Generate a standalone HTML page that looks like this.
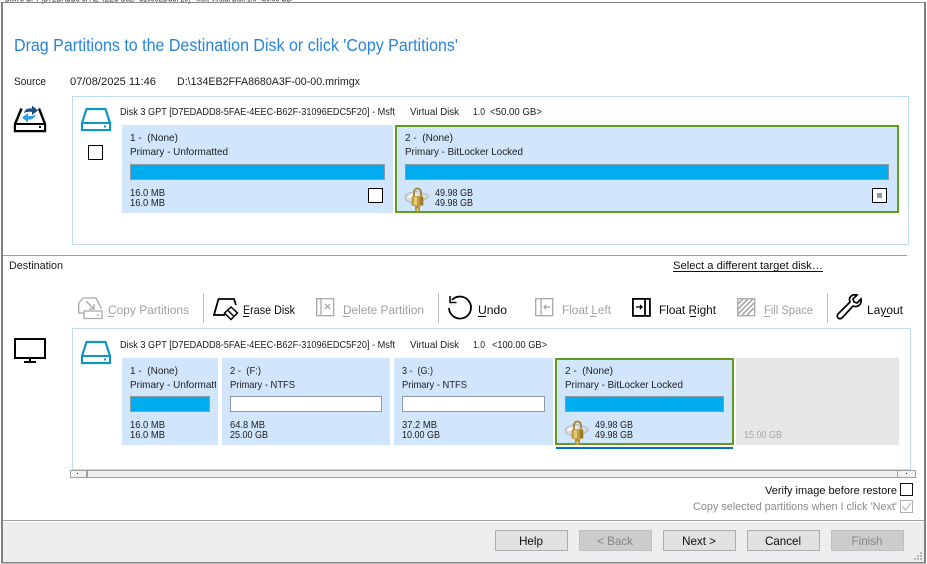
<!DOCTYPE html>
<html><head><meta charset="utf-8"><style>
html,body{margin:0;padding:0;background:#fff;overflow:hidden}
svg{display:block}
text{font-family:"Liberation Sans",sans-serif;font-size:10.2px;fill:#1c1c1c}
.s{font-size:10.2px}
.m{font-size:11px}
.t{font-size:12.4px;fill:#0c0c0c}
.d{font-size:12.4px;fill:#a0a0a0}
.b{font-size:11.6px;fill:#0c0c0c;text-anchor:middle}
.x{font-size:11.6px;fill:#858585;text-anchor:middle}
</style></head><body>
<svg width="927" height="564" viewBox="0 0 927 564" xmlns="http://www.w3.org/2000/svg" shape-rendering="crispEdges">
<defs>
<g id="disk"><path d="M86.500 109H105.500L110 123V130H82V123Z" fill="none" stroke="#0e96c4" stroke-width="2.200" shape-rendering="auto"/><rect x="81" y="122" width="30" height="9" fill="#0e96c4"/><rect x="83" y="124" width="26" height="5" fill="#fff"/><rect x="104" y="125.500" width="2" height="2" fill="#0e96c4"/></g>
<g id="lock" shape-rendering="auto">
<path d="M1 10C3 5 12 4 16 5L24 8C25 11 20 14 14 15 7 16 1 15 1 10Z" fill="#d9dde0" stroke="#a4a9ad" stroke-width=".8"/>
<path d="M3 10C6 7 11 7 14 8 11 11 6 12 3 10Z" fill="#fff"/>
<path d="M10 9V5a3.500 3.500 0 0 1 7 0V9" fill="none" stroke="#a98a3a" stroke-width="2"/>
<rect x="7.500" y="9" width="12" height="10" rx="2" fill="#c39c3c"/>
<rect x="10" y="10" width="3" height="8" fill="#e2cb7a"/>
<rect x="16" y="10" width="3" height="8" fill="#9c7a28"/>
<path d="M11 19h5v4l-1 2h-3l-1-2z" fill="#b8922f"/><circle cx="13.500" cy="22.500" r="1" fill="#f0dfa0"/>
</g>
</defs>

<!-- backdrop remnant & window frame -->
<text x="5" y="1.500" textLength="290" lengthAdjust="spacingAndGlyphs" style="fill:#333">Disk 3 GPT [D7EDADD8-5FAE-4EEC-B62F-31096EDC5F20] - Msft    Virtual Disk   1.0 &lt;50.00 GB&gt;</text>
<rect x="1" y="2" width="925" height="1" fill="#8a8a8a"/>
<rect x="1" y="2" width="2" height="561" fill="#808080"/>
<rect x="924" y="2" width="2" height="561" fill="#808080"/>
<rect x="1" y="562" width="925" height="1.500" fill="#808080"/>

<text x="14" y="51" textLength="444" lengthAdjust="spacingAndGlyphs" style="font-size:17.500px;fill:#2784dc">Drag Partitions to the Destination Disk or click 'Copy Partitions'</text>

<text class="m" x="14" y="85" textLength="32" lengthAdjust="spacingAndGlyphs">Source</text>
<text class="m" x="70" y="85" textLength="86" lengthAdjust="spacingAndGlyphs">07/08/2025 11:46</text>
<text class="m" x="177" y="85" textLength="183" lengthAdjust="spacingAndGlyphs">D:\134EB2FFA8680A3F-00-00.mrimgx</text>

<!-- source icon -->
<path d="M21.500 108.500L15 124V131H45V124L39 108.500" fill="none" stroke="#000" stroke-width="2.400" shape-rendering="auto"/>
<rect x="14" y="123" width="32" height="9" fill="#000"/><rect x="16" y="125" width="28" height="5" fill="#fff"/><rect x="39" y="126" width="2" height="2" fill="#000"/>
<path d="M24 113c1-4 4-5 8-4.500V105.500l6 5-6 4.500v-3c-3-.5-6 0-8 1z" fill="#1d4f86" shape-rendering="auto"/>
<path d="M36 114c-1 4-4 6-8 5.500v3l-6-5 6-4.500v3c3 .5 6-.5 8-1.500z" fill="#29a0e6" shape-rendering="auto"/>

<!-- source panel -->
<rect x="72.500" y="96.500" width="836" height="148" fill="#fff" stroke="#bddcf2"/>
<use href="#disk"/>
<text x="120" y="115" textLength="275" lengthAdjust="spacingAndGlyphs" class="s">Disk 3 GPT [D7EDADD8-5FAE-4EEC-B62F-31096EDC5F20] - Msft</text>
<text x="410" y="115" textLength="49" lengthAdjust="spacingAndGlyphs" class="s">Virtual Disk</text>
<text x="473" y="115" textLength="12" lengthAdjust="spacingAndGlyphs" class="s">1.0</text>
<text x="490" y="115" textLength="52" lengthAdjust="spacingAndGlyphs" class="s">&lt;50.00 GB&gt;</text>
<rect x="88.500" y="145.500" width="14" height="14" fill="#fff" stroke="#000"/>

<rect x="122" y="125" width="271" height="88" fill="#d1e6fc"/>
<text x="130" y="141" textLength="48" lengthAdjust="spacingAndGlyphs" class="s">1 -&#160;&#160;(None)</text>
<text x="130" y="155" textLength="98" lengthAdjust="spacingAndGlyphs" class="s">Primary - Unformatted</text>
<rect x="130.500" y="164.500" width="254" height="15" fill="#00adef" stroke="#8b9aa6"/>
<text x="130" y="196" textLength="35" lengthAdjust="spacingAndGlyphs" class="s">16.0 MB</text>
<text x="130" y="206" textLength="35" lengthAdjust="spacingAndGlyphs" class="s">16.0 MB</text>
<rect x="368.500" y="188.500" width="14" height="14" fill="#fff" stroke="#000"/>

<rect x="396" y="126" width="502" height="86" fill="#d1e6fc" stroke="#5f9e1a" stroke-width="2"/>
<text x="405" y="141" textLength="48" lengthAdjust="spacingAndGlyphs" class="s">2 -&#160;&#160;(None)</text>
<text x="405" y="155" textLength="118" lengthAdjust="spacingAndGlyphs" class="s">Primary - BitLocker Locked</text>
<rect x="405.500" y="164.500" width="483" height="15" fill="#00adef" stroke="#8b9aa6"/>
<use href="#lock" x="404" y="187"/>
<text x="435" y="196" textLength="38" lengthAdjust="spacingAndGlyphs" class="s">49.98 GB</text>
<text x="435" y="206" textLength="38" lengthAdjust="spacingAndGlyphs" class="s">49.98 GB</text>
<rect x="872.500" y="188.500" width="14" height="14" fill="#fff" stroke="#000"/>
<rect x="877" y="193" width="5" height="5" fill="#929ea0"/>

<!-- destination header -->
<rect x="3" y="255" width="904" height="1" fill="#a0a0a0"/>
<text x="9" y="269" textLength="54" lengthAdjust="spacingAndGlyphs" class="m">Destination</text>
<text x="673" y="269" textLength="150" lengthAdjust="spacingAndGlyphs" class="m" style="fill:#111">Select a different target disk…</text>
<rect x="673" y="271" width="150" height="1" fill="#111"/>

<!-- toolbar -->
<g fill="none" stroke="#a8a8a8" stroke-width="1.300" shape-rendering="auto">
<path d="M78.700 303L83 298H96L101.500 309"/><path d="M78.700 303V313H84"/><path d="M84 311H102V318.500H84Z"/><path d="M86 301L94 309M94 304V309H89"/><path d="M97 315h2"/>
</g>
<text x="108" y="314" textLength="81" lengthAdjust="spacingAndGlyphs" class="d">Copy Partitions</text>
<rect x="108" y="316" width="6" height="1" fill="#a3a3a3"/>
<rect x="203" y="293" width="1" height="30" fill="#c0c0c0"/>

<g fill="none" stroke="#000" stroke-width="1.800" shape-rendering="auto">
<path d="M214 315L218.500 299H234L236 305"/><path d="M213 315H225"/>
<path d="M231 307L237.500 313 231 319.500 224.500 313Z" fill="#fff" stroke-width="1.500"/>
<path d="M227.500 310L234 316.500" stroke-width="1.500"/>
</g>
<text x="243" y="314" textLength="52" lengthAdjust="spacingAndGlyphs" class="t">Erase Disk</text>
<rect x="243" y="316" width="6" height="1" fill="#111"/>

<g fill="none" stroke="#a8a8a8" stroke-width="1.300" shape-rendering="auto">
<rect x="316.700" y="298.700" width="17" height="17"/><path d="M321 299v16"/><path d="M325 304l5 5M330 304l-5 5"/>
</g>
<text x="343" y="314" textLength="81" lengthAdjust="spacingAndGlyphs" class="d">Delete Partition</text>
<rect x="343" y="316" width="7" height="1" fill="#a3a3a3"/>
<rect x="438" y="293" width="1" height="30" fill="#c0c0c0"/>

<g fill="none" stroke="#000" stroke-width="1.800" shape-rendering="auto">
<path d="M452 300A11 11 0 1 1 449 308"/><path d="M450 296V302.500H456.500" stroke-width="1.500"/>
</g>
<text x="478" y="314" textLength="29" lengthAdjust="spacingAndGlyphs" class="t">Undo</text>
<rect x="478" y="316" width="8" height="1" fill="#111"/>

<g fill="none" stroke="#a8a8a8" stroke-width="1.300" shape-rendering="auto">
<rect x="535.700" y="298.700" width="17" height="17"/><path d="M541 299v16"/><path d="M550 307h-6M546 305l-2 2 2 2"/>
</g>
<text x="562" y="314" textLength="49" lengthAdjust="spacingAndGlyphs" class="d">Float Left</text>
<rect x="590" y="316" width="6" height="1" fill="#a3a3a3"/>

<g fill="none" stroke="#000" stroke-width="1.800" shape-rendering="auto">
<rect x="632.900" y="298.900" width="17" height="17"/><path d="M645 299v16"/><path d="M636 307h6" stroke-width="1.300"/><path d="M640 305l2 2-2 2" stroke-width="1.300"/>
</g>
<text x="659" y="314" textLength="57" lengthAdjust="spacingAndGlyphs" class="t">Float Right</text>
<rect x="690" y="316" width="6" height="1" fill="#111"/>

<g shape-rendering="auto">
<rect x="737.700" y="298.700" width="17" height="17" fill="#fff" stroke="#a8a8a8" stroke-width="1.300"/>
<path d="M738 304l5-5M738 309l10-10M738 314l15-15M742 315l12-12M747 315l7-7" stroke="#a8a8a8" stroke-width="1.600" fill="none"/>
</g>
<text x="764" y="314" textLength="49" lengthAdjust="spacingAndGlyphs" class="d">Fill Space</text>
<rect x="764" y="316" width="6" height="1" fill="#a3a3a3"/>
<rect x="827" y="293" width="1" height="30" fill="#c0c0c0"/>

<path d="M838 314L850 302C848 297 852 294 857 295L853 299 854 302 857 303 861 299C862 304 858 308 853 306L842 318C839 320 836 317 838 314Z" fill="none" stroke="#000" stroke-width="1.700" shape-rendering="auto"/>
<text x="867" y="314" textLength="36" lengthAdjust="spacingAndGlyphs" class="t">Layout</text>
<rect x="884" y="316" width="6" height="1" fill="#111"/>

<!-- monitor -->
<rect x="15" y="339" width="30" height="19" fill="#fff" stroke="#000" stroke-width="2"/>
<rect x="29" y="358" width="2" height="4" fill="#000"/><rect x="24" y="361" width="12" height="2" fill="#000"/>

<!-- destination panel -->
<rect x="72.500" y="328.500" width="838" height="141" fill="#fff" stroke="#bddcf2"/>
<use href="#disk" y="233"/>
<text x="120" y="348" textLength="275" lengthAdjust="spacingAndGlyphs" class="s">Disk 3 GPT [D7EDADD8-5FAE-4EEC-B62F-31096EDC5F20] - Msft</text>
<text x="410" y="348" textLength="49" lengthAdjust="spacingAndGlyphs" class="s">Virtual Disk</text>
<text x="473" y="348" textLength="12" lengthAdjust="spacingAndGlyphs" class="s">1.0</text>
<text x="492" y="348" textLength="55" lengthAdjust="spacingAndGlyphs" class="s">&lt;100.00 GB&gt;</text>

<rect x="122" y="358" width="96" height="87" fill="#d1e6fc"/>
<text x="130" y="374" textLength="48" lengthAdjust="spacingAndGlyphs" class="s">1 -&#160;&#160;(None)</text>
<svg x="122" y="378" width="94" height="14"><text x="8" y="10" textLength="98" lengthAdjust="spacingAndGlyphs" class="s">Primary - Unformatted</text></svg>
<rect x="130.500" y="396.500" width="79" height="15" fill="#00adef" stroke="#8b9aa6"/>
<text x="130" y="428" textLength="35" lengthAdjust="spacingAndGlyphs" class="s">16.0 MB</text>
<text x="130" y="438" textLength="35" lengthAdjust="spacingAndGlyphs" class="s">16.0 MB</text>

<rect x="222" y="358" width="168" height="87" fill="#d1e6fc"/>
<text x="230" y="374" textLength="31" lengthAdjust="spacingAndGlyphs" class="s">2 -&#160;&#160;(F:)</text>
<text x="230" y="388" textLength="65" lengthAdjust="spacingAndGlyphs" class="s">Primary - NTFS</text>
<rect x="230.500" y="396.500" width="151" height="15" fill="#fff" stroke="#8b9aa6"/>
<text x="230" y="428" textLength="35" lengthAdjust="spacingAndGlyphs" class="s">64.8 MB</text>
<text x="230" y="438" textLength="38" lengthAdjust="spacingAndGlyphs" class="s">25.00 GB</text>

<rect x="394" y="358" width="159" height="87" fill="#d1e6fc"/>
<text x="402" y="374" textLength="31" lengthAdjust="spacingAndGlyphs" class="s">3 -&#160;&#160;(G:)</text>
<text x="402" y="388" textLength="65" lengthAdjust="spacingAndGlyphs" class="s">Primary - NTFS</text>
<rect x="402.500" y="396.500" width="142" height="15" fill="#fff" stroke="#8b9aa6"/>
<text x="402" y="428" textLength="35" lengthAdjust="spacingAndGlyphs" class="s">37.2 MB</text>
<text x="402" y="438" textLength="38" lengthAdjust="spacingAndGlyphs" class="s">10.00 GB</text>

<rect x="556" y="359" width="177" height="85" fill="#d1e6fc" stroke="#5f9e1a" stroke-width="2"/>
<text x="565" y="374" textLength="48" lengthAdjust="spacingAndGlyphs" class="s">2 -&#160;&#160;(None)</text>
<text x="565" y="388" textLength="118" lengthAdjust="spacingAndGlyphs" class="s">Primary - BitLocker Locked</text>
<rect x="565.500" y="396.500" width="158" height="15" fill="#00adef" stroke="#8b9aa6"/>
<use href="#lock" x="564" y="420"/>
<text x="595" y="428" textLength="38" lengthAdjust="spacingAndGlyphs" class="s">49.98 GB</text>
<text x="595" y="438" textLength="38" lengthAdjust="spacingAndGlyphs" class="s">49.98 GB</text>
<rect x="556" y="447" width="177" height="2" fill="#0070c8"/>

<rect x="736" y="358" width="163" height="87" fill="#e6e6e6"/>
<text x="744" y="438" textLength="38" lengthAdjust="spacingAndGlyphs" class="s" style="fill:#a8a8a8">15.00 GB</text>

<!-- scrollbar -->
<rect x="70.500" y="470.500" width="845" height="7" fill="#f0f0f0" stroke="#a0a0a0"/>
<rect x="86" y="470" width="2" height="8" fill="#a0a0a0"/>
<rect x="897" y="470" width="1" height="8" fill="#a0a0a0"/>
<rect x="77" y="473" width="1" height="1" fill="#000"/>
<rect x="906" y="473" width="1" height="1" fill="#000"/>

<!-- options -->
<text x="897" y="494" text-anchor="end" textLength="132" lengthAdjust="spacingAndGlyphs" class="m" style="fill:#111">Verify image before restore</text>
<rect x="900.500" y="483.500" width="12" height="12" fill="#fff" stroke="#111"/>
<text x="897" y="510" text-anchor="end" textLength="204" lengthAdjust="spacingAndGlyphs" class="m" style="fill:#8a8a8a">Copy selected partitions when I click 'Next'</text>
<rect x="900.500" y="500.500" width="12" height="12" fill="#fff" stroke="#b0b0b0"/>
<path d="M902.500 506.500L905.500 510 911 503" fill="none" stroke="#b0b0b0" shape-rendering="auto"/>

<!-- footer -->
<rect x="3" y="520" width="921" height="1" fill="#a0a0a0"/>
<rect x="3" y="522" width="921" height="40" fill="#eeeef0"/>

<rect x="495.500" y="530.500" width="72" height="20" fill="#e1e1e1" stroke="#adadad"/>
<text class="b" x="531" y="545">Help</text>
<rect x="579.500" y="530.500" width="72" height="20" fill="#cccccc" stroke="#bfbfbf"/>
<text class="x" x="615" y="545">&lt; Back</text>
<rect x="663.500" y="530.500" width="72" height="20" fill="#e1e1e1" stroke="#adadad"/>
<text class="b" x="699" y="545">Next &gt;</text>
<rect x="747.500" y="530.500" width="72" height="20" fill="#e1e1e1" stroke="#adadad"/>
<text class="b" x="783" y="545">Cancel</text>
<rect x="831.500" y="530.500" width="72" height="20" fill="#cccccc" stroke="#bfbfbf"/>
<text class="x" x="867" y="545">Finish</text>

<g fill="#b4b4b4"><rect x="920" y="552" width="2" height="2"/><rect x="917" y="555" width="2" height="2"/><rect x="920" y="555" width="2" height="2"/><rect x="914" y="558" width="2" height="2"/><rect x="917" y="558" width="2" height="2"/><rect x="920" y="558" width="2" height="2"/></g>
</svg>
</body></html>
